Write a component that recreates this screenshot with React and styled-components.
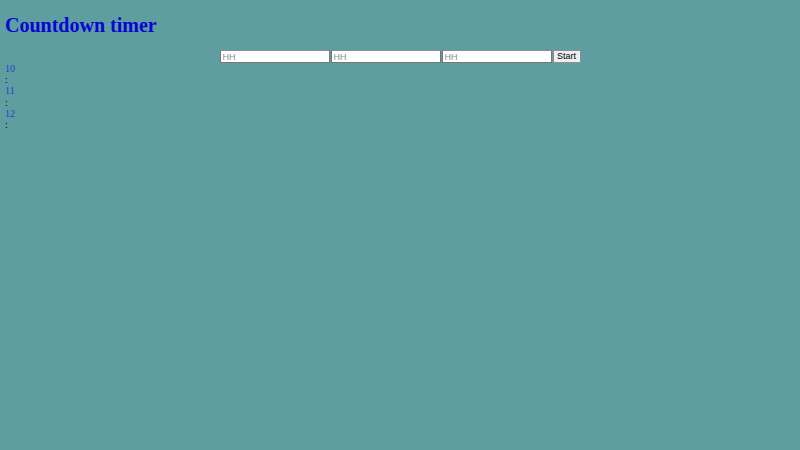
import React from 'react'
import styled, { createGlobalStyle } from 'styled-components'

const GlobalStyle = createGlobalStyle`
  html, body {
    background: #5f9ea0;
  }
  body {
    margin: 5px;
    font-family: "Liberation Serif", "Times New Roman", serif;
  }
`

const Title = styled.h1`
  margin: 9px 0 13px;
  font-size: 20px;
  line-height: 23px;
  font-weight: 700;
  color: #0505d5;
`

const Controls = styled.form`
  display: flex;
  justify-content: center;
  gap: 1px;
  margin-left: -5px;
  margin-right: -5px;
`

const Field = styled.input`
  box-sizing: border-box;
  width: 110px;
  height: 13px;
  padding: 0 2px;
  border: 1px solid #767676;
  border-top-color: #8a8a8a;
  background: #fff;
  font-family: "Liberation Sans", Arial, sans-serif;
  font-size: 9px;
  outline: none;

  &::placeholder {
    color: #8d8d8d;
  }
`

const StartButton = styled.button`
  box-sizing: border-box;
  width: 28px;
  height: 13px;
  padding: 0;
  border: 1px solid #8f8f8f;
  border-radius: 1px;
  background: #efefef;
  color: #000;
  font-family: "Liberation Sans", Arial, sans-serif;
  font-size: 9px;
  line-height: 11px;
`

const Display = styled.div`
  font-size: 10px;
  line-height: 11.2px;
`

const Unit = styled.div`
  color: ${props => (props.sep ? '#000' : '#1d45c5')};
`

export default function App() {
  const parts = ['10', '11', '12']
  return (
    <>
      <GlobalStyle />
      <Title>Countdown timer</Title>
      <Controls onSubmit={e => e.preventDefault()}>
        <Field placeholder="HH" />
        <Field placeholder="HH" />
        <Field placeholder="HH" />
        <StartButton type="submit">Start</StartButton>
      </Controls>
      <Display>
        {parts.map(p => (
          <React.Fragment key={p}>
            <Unit>{p}</Unit>
            <Unit sep>:</Unit>
          </React.Fragment>
        ))}
      </Display>
    </>
  )
}
